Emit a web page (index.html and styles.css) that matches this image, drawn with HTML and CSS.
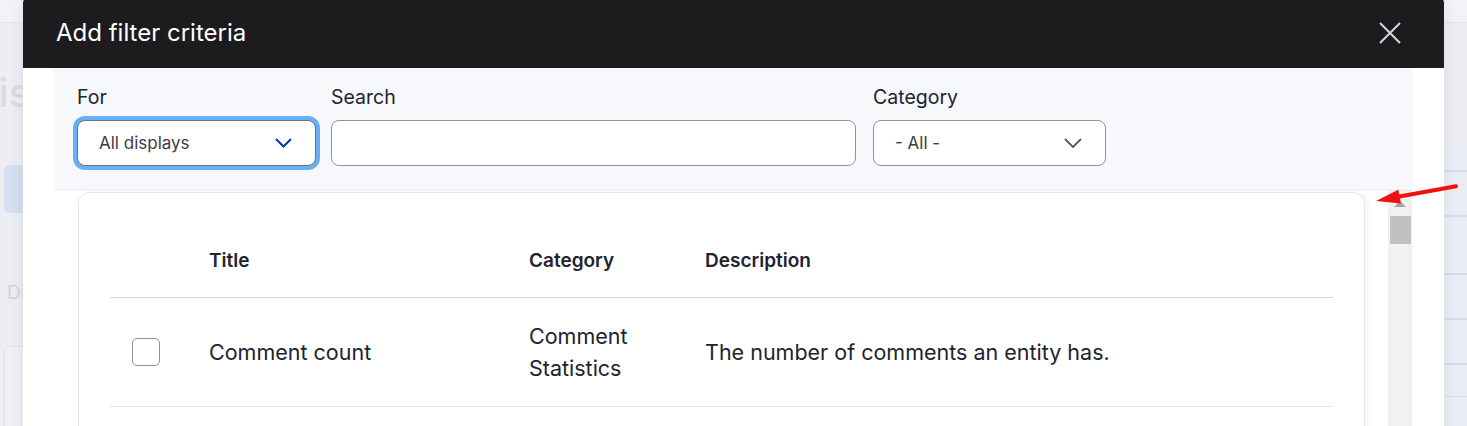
FILE: index.html
```html
<!DOCTYPE html>
<html lang="en">
<head>
    <meta charset="UTF-8">
    <meta name="viewport" content="width=device-width, initial-scale=1.0">
    <title>Add filter criteria</title>
    <link rel="stylesheet" href="styles.css">
</head>
<body>
    <div class="page">
        <div class="page-top"></div>
        <div class="page-head">
            <h1 class="page-title">Lists</h1>
        </div>
        <div class="page-main">
            <div class="page-left">
                <div class="page-tab"></div>
                <div class="page-label">Displays</div>
                <div class="page-card"></div>
            </div>
            <div class="page-right">
                <div class="side-item short"></div>
                <div class="side-item blue">Options</div>
                <div class="side-item blue tall"></div>
                <div class="side-item blue"></div>
                <div class="side-item blue"></div>
                <div class="side-item"></div>
            </div>
        </div>
    </div>

    <div class="dialog">
        <div class="dialog-head">
            <h2 class="dialog-title">Add filter criteria</h2>
            <button class="dialog-close" title="Close">
                <svg width="22" height="22" viewBox="0 0 22 22"><path d="M1 1 L21 21 M21 1 L1 21" stroke="#d6d6da" stroke-width="2" fill="none"/></svg>
            </button>
        </div>
        <div class="dialog-body">
            <div class="filters">
                <div class="field field-for">
                    <label>For</label>
                    <div class="select focused">
                        <span>All displays</span>
                        <svg width="17" height="10" viewBox="0 0 17 10"><path d="M1 1 L8.5 8.5 L16 1" stroke="#0036b1" stroke-width="2" fill="none"/></svg>
                    </div>
                </div>
                <div class="field field-search">
                    <label>Search</label>
                    <input type="text" class="text-input">
                </div>
                <div class="field field-cat">
                    <label>Category</label>
                    <div class="select">
                        <span>- All -</span>
                        <svg width="18" height="10" viewBox="0 0 18 10"><path d="M1 1 L9 9 L17 1" stroke="#55565b" stroke-width="1.8" fill="none"/></svg>
                    </div>
                </div>
            </div>
            <div class="scroll-area">
                <div class="list-wrap">
                    <div class="card">
                        <table class="filter-table">
                            <colgroup>
                                <col class="col-check">
                                <col class="col-title">
                                <col class="col-cat">
                                <col>
                            </colgroup>
                            <thead>
                                <tr>
                                    <th></th>
                                    <th>Title</th>
                                    <th>Category</th>
                                    <th>Description</th>
                                </tr>
                            </thead>
                            <tbody>
                                <tr>
                                    <td><span class="checkbox"></span></td>
                                    <td>Comment count</td>
                                    <td>Comment Statistics</td>
                                    <td>The number of comments an entity has.</td>
                                </tr>
                            </tbody>
                        </table>
                    </div>
                </div>
                <div class="scrollbar">
                    <div class="sb-up"></div>
                    <div class="sb-thumb"></div>
                </div>
            </div>
        </div>
    </div>

    <svg class="note-arrow" width="1467" height="426" viewBox="0 0 1467 426">
        <line x1="1398" y1="196.8" x2="1456" y2="186.2" stroke="#f01010" stroke-width="4" stroke-linecap="round"/>
        <polygon points="1376,201 1398.3,189.7 1400.9,203.5" fill="#f01010"/>
    </svg>
</body>
</html>
```

FILE: styles.css
```css
html, body {
    margin: 0;
    height: 426px;
    overflow: hidden;
}
body {
    font-family: Inter, "Noto Sans", sans-serif;
    color: #222330;
    background-color: #eceef4;
}

/* page behind the dialog */
.page {
    height: 426px;
    display: flex;
    flex-direction: column;
    background-color: #eceef4;
}
.page-top {
    flex-shrink: 0;
    height: 22px;
    background-color: #f2f3f8;
    border-bottom: 1px solid #e4e6ec;
}
.page-head {
    flex-shrink: 0;
    height: 120px;
    overflow: hidden;
}
.page-title {
    margin: 46px 0 0 -24px;
    font-size: 40px;
    font-weight: 500;
    line-height: 48px;
    color: #d9dbe2;
}
.page-main {
    flex: 1;
    min-height: 0;
    display: flex;
    justify-content: space-between;
}
.page-left {
    width: 200px;
    padding-left: 4px;
}
.page-tab {
    margin-top: 22px;
    height: 48px;
    background-color: #d5dff2;
    border-radius: 6px;
}
.page-label {
    margin-top: 68px;
    padding-left: 3px;
    font-size: 19px;
    color: #d3d5dc;
}
.page-card {
    margin-top: 42px;
    height: 120px;
    background-color: #eef0f5;
    border: 1px solid #e0e2e9;
    border-radius: 6px;
}
.page-right {
    width: 300px;
    background-color: #eaedf5;
}
.side-item {
    height: 28px;
    border-bottom: 2px solid #d3ddf1;
    font-size: 19px;
    color: #c9d5ee;
    padding-left: 120px;
}
.side-item.blue {
    height: 43px;
    line-height: 43px;
    padding-left: 190px;
}
.side-item.tall {
    height: 56px;
}
.side-item.short {
    height: 27px;
}
.side-item:last-child {
    border-bottom: 1px solid #dcdfe6;
    height: 31px;
}

/* dialog */
.dialog {
    position: absolute;
    left: 23px;
    top: -3px;
    width: 1421px;
    height: 600px;
    background-color: #ffffff;
    border-radius: 6px;
    overflow: hidden;
    box-shadow: 0 0 16px rgba(0, 0, 0, 0.08);
}
.dialog-head {
    height: 71px;
    background-color: #1c1c1e;
    display: flex;
    align-items: center;
    justify-content: space-between;
    padding: 0 43px 0 33px;
    box-sizing: border-box;
}
.dialog-title {
    margin: 0;
    font-size: 24px;
    font-weight: 400;
    color: #ffffff;
}
.dialog-close {
    background: none;
    border: none;
    padding: 0;
    width: 22px;
    height: 22px;
    cursor: pointer;
}
.dialog-body {
    padding: 0 32px;
}

/* filter controls */
.filters {
    display: flex;
    gap: 15px;
    padding: 17px 22px 23px;
    background-color: #f7f8fc;
    box-shadow: 0 1px 2px rgba(0, 0, 0, 0.08);
    position: relative;
    z-index: 1;
}
.field label {
    display: block;
    font-size: 19.5px;
    line-height: 24px;
    font-weight: 400;
    margin-bottom: 11px;
}
.field-for {
    width: 239px;
}
.field-search {
    width: 525px;
}
.field-cat {
    width: 233px;
    margin-left: 2px;
}
.select,
.text-input {
    height: 46px;
    box-sizing: border-box;
    border: 1px solid #8e929c;
    border-radius: 8px;
    background-color: #ffffff;
}
.select {
    display: flex;
    align-items: center;
    justify-content: space-between;
    padding: 0 23px 0 21px;
    font-size: 17px;
    color: #3b3c46;
}
.select.focused {
    border-color: #6e717b;
    box-shadow: 0 0 0 4px #66b0f5;
}
.text-input {
    display: block;
    width: 100%;
    font: inherit;
}

/* scrolling list */
.scroll-area {
    display: flex;
    height: 260px;
}
.list-wrap {
    flex: 1;
    padding: 3px 23px 0;
}
.card {
    background-color: #ffffff;
    border: 1px solid #e6e7eb;
    border-radius: 12px;
    padding: 32px 31px 0;
    box-shadow: 2px 0 8px rgba(0, 0, 0, 0.05);
    height: 400px;
}
.filter-table {
    width: 100%;
    border-collapse: collapse;
    table-layout: fixed;
    font-size: 21.5px;
}
.col-check {
    width: 77px;
}
.col-title {
    width: 320px;
}
.col-cat {
    width: 176px;
}
.filter-table th {
    text-align: left;
    font-size: 19px;
    font-weight: 600;
    line-height: 24px;
    padding: 24px 22px;
    border-bottom: 1px solid #d3d4d9;
}
.filter-table td {
    padding: 22px;
    line-height: 32px;
    vertical-align: middle;
    border-bottom: 1px solid #e3e4e8;
}
.checkbox {
    display: block;
    width: 28px;
    height: 28px;
    box-sizing: border-box;
    border: 1px solid #8e929c;
    border-radius: 5px;
    background-color: #ffffff;
}

/* fake scrollbar */
.scrollbar {
    width: 24px;
    margin-top: 1px;
    background-color: #f1f1f1;
    display: flex;
    flex-direction: column;
    align-items: center;
}
.sb-up {
    margin-top: 11px;
    width: 0;
    height: 0;
    border-left: 6px solid transparent;
    border-right: 6px solid transparent;
    border-bottom: 6px solid #a3a3a3;
}
.sb-thumb {
    margin-top: 9px;
    width: 21px;
    height: 28px;
    background-color: #c1c1c1;
}

.note-arrow {
    position: absolute;
    left: 0;
    top: 0;
    pointer-events: none;
}
```
